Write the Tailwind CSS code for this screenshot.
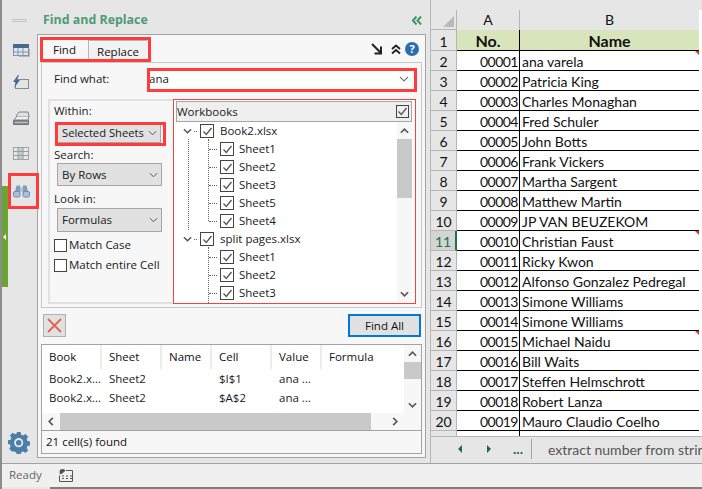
<!DOCTYPE html>
<html lang="en">
<head>
<meta charset="UTF-8">
<script src="https://cdn.jsdelivr.net/npm/@tailwindcss/browser@4"></script>
<title>Find and Replace</title>
</head>
<body class="w-[702px] h-[489px] overflow-hidden bg-white">
<div class="relative w-[702px] h-[489px] flex flex-col bg-[#e6e6e6] border-l-2 border-[#8c8c8c] font-['Open_Sans',sans-serif] text-[11.5px] text-[#1a1a1a]">

  <!-- main area -->
  <div class="flex h-[463px]">
    <!-- icon rail -->
    <div class="relative w-[35px] shrink-0 flex flex-col items-center">
      <div class="mt-[19px] w-[15px] h-[3px] border-y border-[#c4c4c4]"></div>
      <svg class="mt-[22px] ml-[3px]" width="17" height="13" viewBox="0 0 17 13"><rect x="0.5" y="0.5" width="15" height="11" fill="#dfe6ee" stroke="#8094aa"/><rect x="0" y="0" width="16" height="4" fill="#48688c"/><path d="M5 4v8M10 4v8M0 8h16" stroke="#8094aa"/><path d="M16.500 5v7.500H6" stroke="#b5b5b5" fill="none"/></svg>
      <svg class="mt-[18px] ml-[3px]" width="18" height="15" viewBox="0 0 18 15"><rect x="3.500" y="4.500" width="13" height="9" fill="#e4e4e4" stroke="#8a8a8a"/><path d="M6 0L1 7h3l-2 6 6-8H5l2-5z" fill="#3d6da0"/></svg>
      <svg class="mt-[21px] ml-[3px]" width="17" height="15" viewBox="0 0 17 15"><path d="M0.500 9.500V13.500H15.500V9.500Z" fill="#8b8f96" stroke="#6d7278"/><path d="M1 9L4 5H16L15 9Z" fill="#eef0f2" stroke="#7c8288"/><path d="M3 5L6 1H15L16 5" fill="#dde3e8" stroke="#7c8288"/><path d="M2 11.500H15" stroke="#bbb"/></svg>
      <svg class="mt-[21px] ml-[3px]" width="16" height="13" viewBox="0 0 16 13"><rect x="0.500" y="0.500" width="15" height="12" fill="#e8e8e8" stroke="#a2a2a2"/><rect x="5" y="1" width="5" height="11" fill="#bfcbd8"/><path d="M5 0v13M10 0v13M0 4.500h16M0 8.500h16" stroke="#9a9a9a"/></svg>
      <svg class="mt-[23px] ml-[3px]" width="17" height="15" viewBox="0 0 17 15"><path d="M1 13L3.500 2.500H7V13Z" fill="#7f9db9"/><path d="M16 13L13.500 2.500H10V13Z" fill="#7f9db9"/><rect x="7" y="4" width="3" height="5" fill="#b4c6d8"/><rect x="0.500" y="8.500" width="6.500" height="5.500" rx="1.500" fill="#a9c0d5" stroke="#6e8daa"/><rect x="10" y="8.500" width="6.500" height="5.500" rx="1.500" fill="#a9c0d5" stroke="#6e8daa"/></svg>
      <div class="absolute left-0 top-[186px] w-[6px] h-[101px] bg-[#69a532] flex items-center">
        <span class="w-0 h-0 ml-[1px] border-y-[3px] border-y-transparent border-r-[3px] border-r-white"></span>
      </div>
      <svg class="absolute left-[6px] top-[432px]" width="22" height="22" viewBox="0 0 22 22"><path d="M9 0.500h4l.6 2.700 2 .8 2.400-1.500 2.800 2.800-1.500 2.400.8 2 2.700.6v4l-2.700.6-.8 2 1.500 2.400-2.800 2.800-2.400-1.500-2 .8-.6 2.700H9l-.6-2.700-2-.8L4 20.600l-2.800-2.800 1.500-2.400-.8-2L0 12.800V9l2.700-.6.800-2L2 4l2.800-2.800 2.400 1.500 2-.8z" transform="translate(0 -.4) scale(.97)" fill="#4a7fa8"/><circle cx="10.700" cy="10.700" r="4.600" fill="#e6e6e6"/><circle cx="10.700" cy="10.700" r="2.700" fill="#4a7fa8"/></svg>
    </div>

    <!-- add-in pane -->
    <div class="w-[390px] shrink-0 flex flex-col">
      <div class="h-[34px] flex items-center justify-between pl-[6px] pr-[4px] pt-[7px]">
        <span class="font-bold text-[12.400px] text-[#4f9a76]">Find and Replace</span>
        <svg width="10" height="9" viewBox="0 0 10 9" class="mr-[1px]"><path d="M4.500 0.500L1 4.500l3.500 4M9 0.500L5.500 4.500 9 8.500" fill="none" stroke="#3e9562" stroke-width="2"/></svg>
      </div>
      <div class="h-[424px] w-[389px] border border-[#a3a3a3] bg-[#f7f7f7] pl-[3px] pr-[3px] flex flex-col">
        <!-- tabs -->
        <div class="h-[27px] flex items-end justify-between">
          <div class="flex items-end h-[23px]">
            <div class="w-[47px] h-[24px] bg-[#f7f7f7] text-center pt-[3px] text-[#111]">Find</div>
            <div class="w-[59px] h-[22px] bg-[#f2f2f2] border-l border-t border-[#b5b5b5] text-center pt-[2px] text-[#111]">Replace</div>
          </div>
          <div class="flex items-center gap-[8px] h-[24px] pr-[3px] mb-[1px]">
            <svg width="12" height="12" viewBox="0 0 12 12"><path d="M1 1L10 10M10 3.500V10.500H3.500" fill="none" stroke="#222" stroke-width="2"/></svg>
            <svg width="10" height="11" viewBox="0 0 10 11"><path d="M1 5L5 1.500 9 5M1 9.500L5 6 9 9.500" fill="none" stroke="#222" stroke-width="1.800"/></svg>
            <span class="-ml-[4px] w-[14px] h-[14px] rounded-full bg-[#2a6db5] text-white font-bold text-[11px] leading-[14px] text-center">?</span>
          </div>
        </div>
        <!-- find tab content -->
        <div class="h-[246px] border border-[#c8c8c8] flex flex-col pl-[6px]">
          <div class="h-[36px] flex items-center shrink-0">
            <span class="w-[103px] pl-[6px] pb-[4px]">Find what:</span>
            <div class="w-[263px] h-[19px] -ml-[2px] mb-[4px] bg-white flex items-center justify-between pl-[0px] pr-[3px]">
              <span>ana</span>
              <svg width="10" height="6" viewBox="0 0 10 6"><path d="M1 1l4 4 4-4" fill="none" stroke="#777" stroke-width="1.100"/></svg>
            </div>
          </div>
          <div class="flex h-[205px]">
            <div class="w-[125px] h-[205px] border-2 border-[#e1e1e1] border-r-0 pl-[4px] flex flex-col">
              <span class="h-[22px] leading-[19px]">Within:</span>
              <div class="w-[104px] h-[20px] ml-[3px] bg-[#e1e1e1] border border-[#a6a6a6] flex items-center justify-between pl-[4px] pr-[3px]">
                <span class="whitespace-nowrap text-[11.200px]">Selected Sheets</span>
                <svg width="9" height="6" viewBox="0 0 10 6"><path d="M1 1l4 4 4-4" fill="none" stroke="#555" stroke-width="1.100"/></svg>
              </div>
              <span class="h-[20px] leading-[24px]">Search:</span>
              <div class="w-[105px] h-[23px] ml-[3px] bg-[#e1e1e1] border border-[#a6a6a6] flex items-center justify-between pl-[4px] pr-[3px]">
                <span>By Rows</span>
                <svg width="9" height="6" viewBox="0 0 10 6"><path d="M1 1l4 4 4-4" fill="none" stroke="#555" stroke-width="1.100"/></svg>
              </div>
              <span class="h-[22px] leading-[26px]">Look in:</span>
              <div class="w-[105px] h-[24px] ml-[3px] bg-[#e1e1e1] border border-[#a6a6a6] flex items-center justify-between pl-[4px] pr-[3px]">
                <span>Formulas</span>
                <svg width="9" height="6" viewBox="0 0 10 6"><path d="M1 1l4 4 4-4" fill="none" stroke="#555" stroke-width="1.100"/></svg>
              </div>
              <label class="flex items-center gap-[2px] h-[20px] mt-[3px]"><span class="w-[13px] h-[13px] bg-white border border-[#444]"></span>Match Case</label>
              <label class="flex items-center gap-[2px] h-[20px]"><span class="w-[13px] h-[13px] bg-white border border-[#444]"></span>Match entire Cell</label>
            </div>
            <!-- workbook tree -->
            <div class="relative w-[243px] h-[205px] bg-white border border-[#ee4444] pt-[1px] pb-[1px] pl-[2px] pr-[3px] flex flex-col overflow-hidden">
              <div class="h-[21px] shrink-0 bg-[#efefef] border border-[#a6a6a6] flex items-center justify-between pr-[2px]">
                <span>Workbooks</span>
                <span class="w-[13px] h-[13px] border border-[#444] flex items-center justify-center"><svg width="11" height="9" viewBox="0 0 11 9"><path d="M1.500 4.500l2.800 3L9.500 1" fill="none" stroke="#555" stroke-width="1.300"/></svg></span>
              </div>
              <div class="flex flex-1 min-h-0">
                <div class="relative w-[221px]">
                  <span class="absolute left-[12px] top-[17px] h-[91px] border-l border-dotted border-[#666]"></span>
                  <span class="absolute left-[32px] top-[17px] h-[82px] border-l border-dotted border-[#666]"></span>
                  <span class="absolute left-[32px] top-[125px] h-[60px] border-l border-dotted border-[#666]"></span>
                  <div class="flex items-center h-[18px] pl-[7px]"><svg width="9" height="6" viewBox="0 0 10 6"><path d="M1 1l4 4 4-4" fill="none" stroke="#555" stroke-width="1.600"/></svg><span class="w-[3px] ml-[2px] mr-[3px] border-t border-dotted border-[#666]"></span><span class="w-[14px] h-[14px] border border-[#444] flex items-center justify-center"><svg width="11" height="9" viewBox="0 0 11 9"><path d="M1.500 4.500l2.800 3L9.500 1" fill="none" stroke="#555" stroke-width="1.300"/></svg></span><span class="ml-[6px]">Book2.xlsx</span></div>
                  <div class="flex items-center h-[18px] pl-[33px]"><span class="w-[8px] mr-[3px] border-t border-dotted border-[#666]"></span><span class="w-[14px] h-[14px] border border-[#444] flex items-center justify-center"><svg width="11" height="9" viewBox="0 0 11 9"><path d="M1.500 4.500l2.800 3L9.500 1" fill="none" stroke="#555" stroke-width="1.300"/></svg></span><span class="ml-[5px]">Sheet1</span></div>
                  <div class="flex items-center h-[18px] pl-[33px]"><span class="w-[8px] mr-[3px] border-t border-dotted border-[#666]"></span><span class="w-[14px] h-[14px] border border-[#444] flex items-center justify-center"><svg width="11" height="9" viewBox="0 0 11 9"><path d="M1.500 4.500l2.800 3L9.500 1" fill="none" stroke="#555" stroke-width="1.300"/></svg></span><span class="ml-[5px]">Sheet2</span></div>
                  <div class="flex items-center h-[18px] pl-[33px]"><span class="w-[8px] mr-[3px] border-t border-dotted border-[#666]"></span><span class="w-[14px] h-[14px] border border-[#444] flex items-center justify-center"><svg width="11" height="9" viewBox="0 0 11 9"><path d="M1.500 4.500l2.800 3L9.500 1" fill="none" stroke="#555" stroke-width="1.300"/></svg></span><span class="ml-[5px]">Sheet3</span></div>
                  <div class="flex items-center h-[18px] pl-[33px]"><span class="w-[8px] mr-[3px] border-t border-dotted border-[#666]"></span><span class="w-[14px] h-[14px] border border-[#444] flex items-center justify-center"><svg width="11" height="9" viewBox="0 0 11 9"><path d="M1.500 4.500l2.800 3L9.500 1" fill="none" stroke="#555" stroke-width="1.300"/></svg></span><span class="ml-[5px]">Sheet5</span></div>
                  <div class="flex items-center h-[18px] pl-[33px]"><span class="w-[8px] mr-[3px] border-t border-dotted border-[#666]"></span><span class="w-[14px] h-[14px] border border-[#444] flex items-center justify-center"><svg width="11" height="9" viewBox="0 0 11 9"><path d="M1.500 4.500l2.800 3L9.500 1" fill="none" stroke="#555" stroke-width="1.300"/></svg></span><span class="ml-[5px]">Sheet4</span></div>
                  <div class="flex items-center h-[18px] pl-[7px]"><svg width="9" height="6" viewBox="0 0 10 6"><path d="M1 1l4 4 4-4" fill="none" stroke="#555" stroke-width="1.600"/></svg><span class="w-[3px] ml-[2px] mr-[3px] border-t border-dotted border-[#666]"></span><span class="w-[14px] h-[14px] border border-[#444] flex items-center justify-center"><svg width="11" height="9" viewBox="0 0 11 9"><path d="M1.500 4.500l2.800 3L9.500 1" fill="none" stroke="#555" stroke-width="1.300"/></svg></span><span class="ml-[6px]">split pages.xlsx</span></div>
                  <div class="flex items-center h-[18px] pl-[33px]"><span class="w-[8px] mr-[3px] border-t border-dotted border-[#666]"></span><span class="w-[14px] h-[14px] border border-[#444] flex items-center justify-center"><svg width="11" height="9" viewBox="0 0 11 9"><path d="M1.500 4.500l2.800 3L9.500 1" fill="none" stroke="#555" stroke-width="1.300"/></svg></span><span class="ml-[5px]">Sheet1</span></div>
                  <div class="flex items-center h-[18px] pl-[33px]"><span class="w-[8px] mr-[3px] border-t border-dotted border-[#666]"></span><span class="w-[14px] h-[14px] border border-[#444] flex items-center justify-center"><svg width="11" height="9" viewBox="0 0 11 9"><path d="M1.500 4.500l2.800 3L9.500 1" fill="none" stroke="#555" stroke-width="1.300"/></svg></span><span class="ml-[5px]">Sheet2</span></div>
                  <div class="flex items-center h-[18px] pl-[33px]"><span class="w-[8px] mr-[3px] border-t border-dotted border-[#666]"></span><span class="w-[14px] h-[14px] border border-[#444] flex items-center justify-center"><svg width="11" height="9" viewBox="0 0 11 9"><path d="M1.500 4.500l2.800 3L9.500 1" fill="none" stroke="#555" stroke-width="1.300"/></svg></span><span class="ml-[5px]">Sheet3</span></div>
                </div>
                <div class="w-[15px] bg-[#f7f7f7] flex flex-col items-center">
                  <svg class="mt-[6px]" width="9" height="6" viewBox="0 0 10 6"><path d="M1 5l4-4 4 4" fill="none" stroke="#555" stroke-width="1.800"/></svg>
                  <div class="w-[15px] h-[59px] mt-[5px] bg-[#c9c9c9]"></div>
                  <svg class="mt-auto mb-[5px]" width="9" height="6" viewBox="0 0 10 6"><path d="M1 1l4 4 4-4" fill="none" stroke="#555" stroke-width="1.800"/></svg>
                </div>
              </div>
            </div>
          </div>
        </div>
        <!-- buttons -->
        <div class="h-[36px] flex items-center justify-between pl-[2px] pr-[1px] shrink-0 pb-[1px]">
          <div class="w-[23px] h-[23px] bg-[#e1e1e1] border border-[#b0b0b0] flex items-center justify-center">
            <svg width="15" height="15" viewBox="0 0 15 15"><path d="M1 1l13 13M14 1L1 14" stroke="#e0664c" stroke-width="1.800"/></svg>
          </div>
          <div class="w-[73px] h-[23px] bg-[#e1e1e1] border-2 border-[#0078d7] text-center leading-[19px] text-[#111]">Find All</div>
        </div>
        <!-- results -->
        <div class="h-[110px] border border-[#a3a3a3] bg-white flex flex-col">
          <div class="h-[85px] flex flex-col shrink-0 relative">
            <div class="flex flex-1 min-h-0">
              <div class="flex-1">
                <div class="flex h-[24px] items-center bg-white">
                  <div class="w-[60px] h-[24px] leading-[24px] pl-[7px] border-r-2 border-[#ececec] text-[#111]">Book</div>
                  <div class="w-[60px] h-[24px] leading-[24px] pl-[7px] border-r-2 border-[#ececec] text-[#111]">Sheet</div>
                  <div class="w-[50px] h-[24px] leading-[24px] pl-[7px] border-r-2 border-[#ececec] text-[#111]">Name</div>
                  <div class="w-[60px] h-[24px] leading-[24px] pl-[7px] border-r-2 border-[#ececec] text-[#111]">Cell</div>
                  <div class="w-[50px] h-[24px] leading-[24px] pl-[7px] border-r-2 border-[#ececec] text-[#111]">Value</div>
                  <div class="pl-[7px] text-[#111]">Formula</div>
                </div>
                <div class="flex h-[19px] items-center">
                  <div class="w-[60px] pl-[7px]">Book2.x...</div><div class="w-[60px] pl-[7px]">Sheet2</div><div class="w-[50px]"></div><div class="w-[60px] pl-[7px]">$I$1</div><div class="w-[50px] pl-[7px]">ana ...</div>
                </div>
                <div class="flex h-[19px] items-center">
                  <div class="w-[60px] pl-[7px]">Book2.x...</div><div class="w-[60px] pl-[7px]">Sheet2</div><div class="w-[50px]"></div><div class="w-[60px] pl-[7px]">$A$2</div><div class="w-[50px] pl-[7px]">ana ...</div>
                </div>
              </div>
              <div class="w-[17px] bg-[#f7f7f7] flex flex-col items-center">
                <svg class="mt-[6px]" width="9" height="6" viewBox="0 0 10 6"><path d="M1 5l4-4 4 4" fill="none" stroke="#555" stroke-width="1.800"/></svg>
                <div class="w-[17px] h-[17px] mt-[5px] bg-[#c9c9c9]"></div>
                <svg class="mt-auto mb-[5px]" width="9" height="6" viewBox="0 0 10 6"><path d="M1 1l4 4 4-4" fill="none" stroke="#555" stroke-width="1.800"/></svg>
              </div>
            </div>
            <div class="h-[17px] shrink-0 bg-[#f7f7f7] flex items-center">
              <svg class="ml-[6px]" width="6" height="9" viewBox="0 0 6 10"><path d="M5 1L1 5l4 4" fill="none" stroke="#555" stroke-width="1.800"/></svg>
              <div class="w-[311px] h-[17px] ml-[6px] bg-[#c9c9c9]"></div>
              <svg class="ml-[21px]" width="6" height="9" viewBox="0 0 6 10"><path d="M1 1l4 4-4 4" fill="none" stroke="#555" stroke-width="1.800"/></svg>
            </div>
          </div>
          <div class="h-[24px] border-t border-[#a3a3a3] bg-[#f7f7f7] flex items-center pl-[4px] text-[#111]">21 cell(s) found</div>
        </div>
      </div>
    </div>

    <!-- worksheet -->
    <div class="ml-[3px] flex-1 flex flex-col font-['Lato',sans-serif] text-[14px] text-[#111] border-l border-[#b8b8b8]">
      <div class="h-[10px] shrink-0"></div>
      <div class="grid grid-cols-[26px_63px_179px] grid-rows-[20px_21px] auto-rows-[20px] bg-white flex-1 overflow-hidden content-start">
        <div class="bg-[#e6e6e6] border-r border-b border-[#b5b5b5] relative"><span class="absolute right-[2px] bottom-[2px] w-0 h-0 border-l-[11px] border-l-transparent border-b-[11px] border-b-[#b9b9b9]"></span></div>
        <div class="bg-[#e6e6e6] border-r border-[#b5b5b5] text-center leading-[20px]">A</div>
        <div class="bg-[#e6e6e6] text-center leading-[20px]">B</div>

        <div class="bg-[#e6e6e6] border-r border-b border-[#b5b5b5] text-center leading-[23px]">1</div>
        <div class="bg-[#d8e4bc] border-r border-b border-black text-center font-bold text-[16px] leading-[21px]">No.</div>
        <div class="bg-[#d8e4bc] border-b border-black text-center font-bold text-[16px] leading-[21px]">Name</div>

        <div class="bg-[#e6e6e6] border-r border-b border-[#b5b5b5] text-center leading-[21px]">2</div><div class="border-r border-b border-black text-right pr-[1px] tracking-[-0.5px] leading-[21px]">00001</div><div class="relative border-b border-black pl-[2px] leading-[21px]">ana varela<span class="absolute right-0 top-0 w-0 h-0 border-l-[4px] border-l-transparent border-t-[4px] border-t-[#e03030]"></span></div>
        <div class="bg-[#e6e6e6] border-r border-b border-[#b5b5b5] text-center leading-[21px]">3</div><div class="border-r border-b border-black text-right pr-[1px] tracking-[-0.5px] leading-[21px]">00002</div><div class="border-b border-black pl-[2px] leading-[21px]">Patricia King</div>
        <div class="bg-[#e6e6e6] border-r border-b border-[#b5b5b5] text-center leading-[21px]">4</div><div class="border-r border-b border-black text-right pr-[1px] tracking-[-0.5px] leading-[21px]">00003</div><div class="border-b border-black pl-[2px] leading-[21px]">Charles Monaghan</div>
        <div class="bg-[#e6e6e6] border-r border-b border-[#b5b5b5] text-center leading-[21px]">5</div><div class="border-r border-b border-black text-right pr-[1px] tracking-[-0.5px] leading-[21px]">00004</div><div class="border-b border-black pl-[2px] leading-[21px]">Fred Schuler</div>
        <div class="bg-[#e6e6e6] border-r border-b border-[#b5b5b5] text-center leading-[21px]">6</div><div class="border-r border-b border-black text-right pr-[1px] tracking-[-0.5px] leading-[21px]">00005</div><div class="border-b border-black pl-[2px] leading-[21px]">John Botts</div>
        <div class="bg-[#e6e6e6] border-r border-b border-[#b5b5b5] text-center leading-[21px]">7</div><div class="border-r border-b border-black text-right pr-[1px] tracking-[-0.5px] leading-[21px]">00006</div><div class="border-b border-black pl-[2px] leading-[21px]">Frank Vickers</div>
        <div class="bg-[#e6e6e6] border-r border-b border-[#b5b5b5] text-center leading-[21px]">8</div><div class="border-r border-b border-black text-right pr-[1px] tracking-[-0.5px] leading-[21px]">00007</div><div class="border-b border-black pl-[2px] leading-[21px]">Martha Sargent</div>
        <div class="bg-[#e6e6e6] border-r border-b border-[#b5b5b5] text-center leading-[21px]">9</div><div class="border-r border-b border-black text-right pr-[1px] tracking-[-0.5px] leading-[21px]">00008</div><div class="border-b border-black pl-[2px] leading-[21px]">Matthew Martin</div>
        <div class="bg-[#e6e6e6] border-r border-b border-[#b5b5b5] text-center leading-[21px]">10</div><div class="border-r border-b border-black text-right pr-[1px] tracking-[-0.5px] leading-[21px]">00009</div><div class="border-b border-black pl-[2px] leading-[21px]">JP VAN BEUZEKOM</div>
        <div class="bg-[#d4d4d4] border-r-2 border-r-[#217346] border-b border-b-[#b5b5b5] text-center leading-[21px] text-[#217346]">11</div><div class="border-r border-b border-black text-right pr-[1px] tracking-[-0.5px] leading-[21px]">00010</div><div class="relative border-b border-black pl-[2px] leading-[21px]">Christian Faust<span class="absolute right-0 top-0 w-0 h-0 border-l-[4px] border-l-transparent border-t-[4px] border-t-[#e03030]"></span></div>
        <div class="bg-[#e6e6e6] border-r border-b border-[#b5b5b5] text-center leading-[21px]">12</div><div class="border-r border-b border-black text-right pr-[1px] tracking-[-0.5px] leading-[21px]">00011</div><div class="border-b border-black pl-[2px] leading-[21px]">Ricky Kwon</div>
        <div class="bg-[#e6e6e6] border-r border-b border-[#b5b5b5] text-center leading-[21px]">13</div><div class="border-r border-b border-black text-right pr-[1px] tracking-[-0.5px] leading-[21px]">00012</div><div class="border-b border-black pl-[2px] leading-[21px]">Alfonso Gonzalez Pedregal</div>
        <div class="bg-[#e6e6e6] border-r border-b border-[#b5b5b5] text-center leading-[21px]">14</div><div class="border-r border-b border-black text-right pr-[1px] tracking-[-0.5px] leading-[21px]">00013</div><div class="border-b border-black pl-[2px] leading-[21px]">Simone Williams</div>
        <div class="bg-[#e6e6e6] border-r border-b border-[#b5b5b5] text-center leading-[21px]">15</div><div class="border-r border-b border-black text-right pr-[1px] tracking-[-0.5px] leading-[21px]">00014</div><div class="border-b border-black pl-[2px] leading-[21px]">Simone Williams</div>
        <div class="bg-[#e6e6e6] border-r border-b border-[#b5b5b5] text-center leading-[21px]">16</div><div class="border-r border-b border-black text-right pr-[1px] tracking-[-0.5px] leading-[21px]">00015</div><div class="relative border-b border-black pl-[2px] leading-[21px]">Michael Naidu<span class="absolute right-0 top-0 w-0 h-0 border-l-[4px] border-l-transparent border-t-[4px] border-t-[#e03030]"></span></div>
        <div class="bg-[#e6e6e6] border-r border-b border-[#b5b5b5] text-center leading-[21px]">17</div><div class="border-r border-b border-black text-right pr-[1px] tracking-[-0.5px] leading-[21px]">00016</div><div class="border-b border-black pl-[2px] leading-[21px]">Bill Waits</div>
        <div class="bg-[#e6e6e6] border-r border-b border-[#b5b5b5] text-center leading-[21px]">18</div><div class="border-r border-b border-black text-right pr-[1px] tracking-[-0.5px] leading-[21px]">00017</div><div class="border-b border-black pl-[2px] leading-[21px]">Steffen Helmschrott</div>
        <div class="bg-[#e6e6e6] border-r border-b border-[#b5b5b5] text-center leading-[21px]">19</div><div class="border-r border-b border-black text-right pr-[1px] tracking-[-0.5px] leading-[21px]">00018</div><div class="border-b border-black pl-[2px] leading-[21px]">Robert Lanza</div>
        <div class="bg-[#e6e6e6] border-r border-b border-[#b5b5b5] text-center leading-[21px]">20</div><div class="border-r border-b border-black text-right pr-[1px] tracking-[-0.5px] leading-[21px]">00019</div><div class="border-b border-black pl-[2px] leading-[21px]">Mauro Claudio Coelho</div>
        <div class="bg-[#e6e6e6] border-r border-[#b5b5b5]"></div><div class="border-r border-black"></div><div></div>
      </div>
      <div class="h-[27px] shrink-0 bg-[#e6e6e6] border-t border-[#b5b5b5] flex items-center overflow-hidden whitespace-nowrap pb-[2px]">
        <span class="ml-[27px] w-0 h-0 border-y-[4px] border-y-transparent border-r-[4px] border-r-[#1e6b3c]"></span>
        <span class="ml-[25px] w-0 h-0 border-y-[4px] border-y-transparent border-l-[4px] border-l-[#1e6b3c]"></span>
        <span class="ml-[22px] font-bold text-[#1e6b3c] leading-[12px]">...</span>
        <span class="ml-[8px] w-px h-[20px] bg-[#a5a5a5]"></span>
        <span class="ml-[16px] text-[#555]">extract number from string</span>
      </div>
    </div>
  </div>

  <!-- status bar -->
  <div class="h-[24px] shrink-0 bg-[#f0f0f0] border-t border-[#a3a3a3] flex items-center pl-[7px] pb-[1px] text-[#666]">
    <span class="w-[50px]">Ready</span>
    <svg width="14" height="13" viewBox="0 0 14 13"><circle cx="3.500" cy="3" r="3" fill="#555"/><path d="M7 1.500H13.500V12.500H.5V6.500" fill="#f0f0f0" stroke="#555"/><path d="M3 7h2M7 7h2M11 7h2M3 9.500h2M7 9.500h2M11 9.500h2" stroke="#555"/></svg>
  </div>
  <div class="h-[2px] ml-[48px] bg-[#7f7f7f]"></div>

  <!-- red callouts drawn over the pane -->
  <div class="absolute left-[6px] top-[173px] w-[31px] h-[36px] border-[3px] border-[#ff3b3b]"></div>
  <div class="absolute left-[38px] top-[37px] w-[111px] h-[25px] border-[3px] border-[#ff3b3b]"></div>
  <div class="absolute left-[145px] top-[68px] w-[270px] h-[24px] border-[3px] border-[#ff3b3b]"></div>
  <div class="absolute left-[53px] top-[122px] w-[111px] h-[24px] border-[3px] border-[#ff3b3b]"></div>
</div>
</body>
</html>
